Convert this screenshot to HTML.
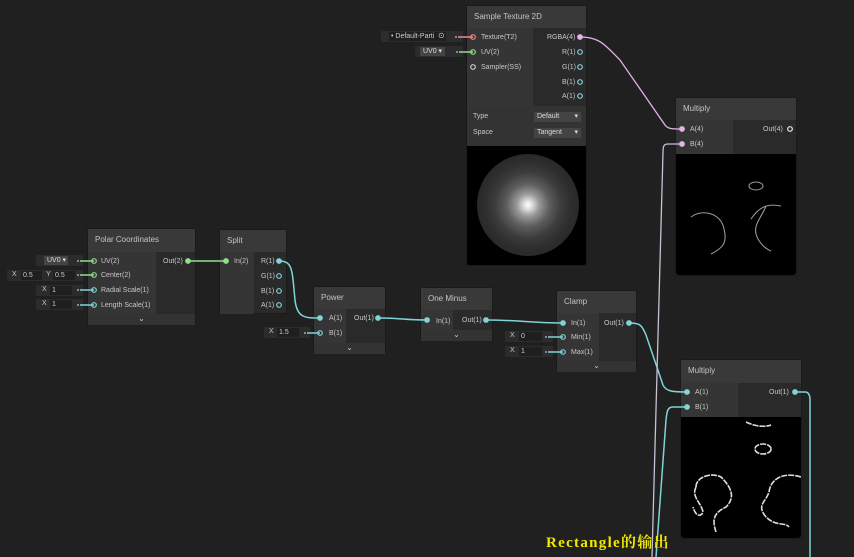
<!DOCTYPE html>
<html><head><meta charset="utf-8"><style>
body{margin:0;width:854px;height:557px;background:#202020;position:relative;overflow:hidden;font-family:"Liberation Sans",sans-serif;font-size:7px;color:#c8c8c8}
.n{position:absolute;background:#2a2a2a;border:1px solid #1a1a1a;box-sizing:border-box;border-radius:2px}
.h{position:absolute;left:0;right:0;top:0;background:#393939;color:#c4c4c4;font-size:8px;padding-left:7px;box-sizing:border-box}
.in{position:absolute;left:0;background:#353535}
.col{position:absolute;left:0;right:0;background:#333;text-align:center;color:#ccc;font-size:8px;line-height:10px}
.t{position:absolute;white-space:nowrap}
.f{position:absolute;background:#2c2c2c;height:11px;border-radius:1px}
.fb{position:absolute;background:#1f1f1f;height:9px;top:1px;color:#ccc;line-height:9px;padding-left:2px;box-sizing:border-box}
.d{position:absolute;background:#444;color:#ddd;height:10px;line-height:10px;padding-left:3px;box-sizing:border-box}
svg{position:absolute;left:0;top:0}
</style></head><body>

<div class="n" style="left:87px;top:228px;width:109px;height:97px">
<div class="h" style="height:23px;line-height:22px">Polar Coordinates</div>
<div class="in" style="top:23px;width:68px;height:62px"></div>
<div class="col" style="top:85px;height:11px">⌄</div>
<div class="t" style="left:13px;top:29px">UV(2)</div>
<div class="t" style="left:13px;top:43px">Center(2)</div>
<div class="t" style="left:13px;top:58px">Radial Scale(1)</div>
<div class="t" style="left:13px;top:73px">Length Scale(1)</div>
<div class="t" style="left:75px;top:29px">Out(2)</div>
</div>
<div class="n" style="left:219px;top:229px;width:68px;height:85px">
<div class="h" style="height:22px;line-height:21px">Split</div>
<div class="in" style="top:22px;width:34px;height:62px"></div>
<div class="t" style="left:14px;top:28px">In(2)</div>
<div class="t" style="left:41px;top:28px">R(1)</div>
<div class="t" style="left:41px;top:43px">G(1)</div>
<div class="t" style="left:41px;top:58px">B(1)</div>
<div class="t" style="left:41px;top:72px">A(1)</div>
</div>
<div class="n" style="left:313px;top:286px;width:73px;height:68px">
<div class="h" style="height:22px;line-height:21px">Power</div>
<div class="in" style="top:22px;width:32px;height:34px"></div>
<div class="col" style="top:56px;height:11px">⌄</div>
<div class="t" style="left:15px;top:28px">A(1)</div>
<div class="t" style="left:15px;top:43px">B(1)</div>
<div class="t" style="left:40px;top:28px">Out(1)</div>
</div>
<div class="n" style="left:420px;top:287px;width:73px;height:54px">
<div class="h" style="height:22px;line-height:21px">One Minus</div>
<div class="in" style="top:22px;width:32px;height:20px"></div>
<div class="col" style="top:42px;height:11px">⌄</div>
<div class="t" style="left:15px;top:30px">In(1)</div>
<div class="t" style="left:41px;top:29px">Out(1)</div>
</div>
<div class="n" style="left:556px;top:290px;width:81px;height:82px">
<div class="h" style="height:22px;line-height:21px">Clamp</div>
<div class="in" style="top:22px;width:42px;height:48px"></div>
<div class="col" style="top:70px;height:11px">⌄</div>
<div class="t" style="left:14px;top:29px">In(1)</div>
<div class="t" style="left:14px;top:43px">Min(1)</div>
<div class="t" style="left:14px;top:58px">Max(1)</div>
<div class="t" style="left:47px;top:29px">Out(1)</div>
</div>
<div class="n" style="left:466px;top:5px;width:121px;height:261px">
<div class="h" style="height:22px;line-height:21px">Sample Texture 2D</div>
<div class="in" style="top:22px;width:66px;height:78px"></div>
<div style="position:absolute;left:0;right:0;top:100px;height:40px;background:#333"></div>
<div class="t" style="left:14px;top:28px">Texture(T2)</div>
<div class="t" style="left:14px;top:43px">UV(2)</div>
<div class="t" style="left:14px;top:58px">Sampler(SS)</div>
<div class="t" style="left:80px;top:28px">RGBA(4)</div>
<div class="t" style="left:95px;top:43px">R(1)</div>
<div class="t" style="left:95px;top:58px">G(1)</div>
<div class="t" style="left:95px;top:73px">B(1)</div>
<div class="t" style="left:95px;top:87px">A(1)</div>
<div class="t" style="left:6px;top:107px">Type</div>
<div class="t" style="left:6px;top:123px">Space</div>
<div class="d" style="left:67px;top:106px;width:47px">Default<span style="position:absolute;right:3px">▾</span></div>
<div class="d" style="left:67px;top:122px;width:47px">Tangent<span style="position:absolute;right:3px">▾</span></div>
<div style="position:absolute;left:0;top:140px;width:119px;height:119px;background:#000;border-radius:0 0 2px 2px">
<div style="position:absolute;left:10px;top:8px;width:102px;height:102px;border-radius:50%;background:radial-gradient(circle closest-side,#fff 0%,#e0e0e0 8%,#999 22%,#5e5e5e 42%,#3c3c3c 65%,#2e2e2e 85%,#292929 100%)"></div></div>
</div>
<div class="n" style="left:675px;top:97px;width:122px;height:179px">
<div class="h" style="height:22px;line-height:21px">Multiply</div>
<div class="in" style="top:22px;width:57px;height:34px"></div>
<div class="t" style="left:14px;top:28px">A(4)</div>
<div class="t" style="left:14px;top:43px">B(4)</div>
<div class="t" style="left:87px;top:28px">Out(4)</div>
<div style="position:absolute;left:0;top:56px;width:120px;height:121px;background:#000;border-radius:0 0 3px 3px">
<svg width="120" height="121" fill="none" stroke="#999" stroke-width="1.1"><path d="M15 63 C25 55 45 58 48 75 C52 90 45 95 35 100"/><path d="M75 65 C85 50 95 50 105 52 M90 52 C85 65 75 72 82 85 C86 92 90 95 95 97"/><ellipse cx="80" cy="32" rx="7" ry="4"/></svg></div>
</div>
<div class="n" style="left:680px;top:359px;width:122px;height:180px">
<div class="h" style="height:23px;line-height:22px">Multiply</div>
<div class="in" style="top:23px;width:57px;height:34px"></div>
<div class="t" style="left:14px;top:29px">A(1)</div>
<div class="t" style="left:14px;top:44px">B(1)</div>
<div class="t" style="left:88px;top:29px">Out(1)</div>
<div style="position:absolute;left:0;top:57px;width:120px;height:121px;background:#000;border-radius:0 0 3px 3px">
<svg width="120" height="121" fill="none" stroke="#ddd" stroke-width="1.6" stroke-dasharray="6 1"><path d="M65 5 C75 10 85 10 90 8"/><ellipse cx="82" cy="32" rx="8" ry="5"/><path d="M15 70 C15 60 30 55 40 60 C50 70 55 80 45 90 C35 95 30 100 35 115 M15 70 C10 80 20 85 22 95 C20 100 15 100 12 90"/><path d="M120 60 C105 55 90 60 88 75 C85 85 75 88 85 100 C95 110 105 105 108 110"/></svg></div>
</div>

<div class="f" style="left:36px;top:255px;width:47px"><div class="d" style="left:8px;top:1px;width:24px;height:9px;line-height:9px;background:#444">UV0 ▾</div></div>
<div class="f" style="left:7px;top:270px;width:76px"><span class="t" style="left:5px;top:1px">X</span><div class="fb" style="left:14px;width:21px">0.5</div><span class="t" style="left:39px;top:1px">Y</span><div class="fb" style="left:46px;width:22px">0.5</div></div>
<div class="f" style="left:36px;top:285px;width:47px"><span class="t" style="left:6px;top:1px">X</span><div class="fb" style="left:14px;width:22px">1</div></div>
<div class="f" style="left:36px;top:299px;width:47px"><span class="t" style="left:6px;top:1px">X</span><div class="fb" style="left:14px;width:22px">1</div></div>
<div class="f" style="left:264px;top:327px;width:46px"><span class="t" style="left:5px;top:1px">X</span><div class="fb" style="left:13px;width:22px">1.5</div></div>
<div class="f" style="left:505px;top:331px;width:48px"><span class="t" style="left:5px;top:1px">X</span><div class="fb" style="left:14px;width:23px">0</div></div>
<div class="f" style="left:505px;top:346px;width:48px"><span class="t" style="left:5px;top:1px">X</span><div class="fb" style="left:14px;width:23px">1</div></div>
<div class="f" style="left:381px;top:31px;width:82px"><div class="fb" style="left:8px;width:57px;color:#ccc">• Default-Parti</div><span class="t" style="left:57px;top:0px;font-size:8px">⊙</span></div>
<div class="f" style="left:415px;top:46px;width:48px"><div class="d" style="left:5px;top:1px;width:25px;height:9px;line-height:9px">UV0 ▾</div></div>

<svg width="854" height="557" fill="none">
<g fill="#ccc"><circle cx="78" cy="261" r=".9"/><circle cx="78" cy="275" r=".9"/><circle cx="78" cy="290" r=".9"/><circle cx="78" cy="305" r=".9"/><circle cx="305" cy="333" r=".9"/><circle cx="546" cy="337" r=".9"/><circle cx="546" cy="352" r=".9"/><circle cx="456" cy="37" r=".9"/><circle cx="457" cy="52" r=".9"/></g>
<g stroke="#8fe08a" stroke-width="1.5"><path d="M80 261H94M80 275H94M188 261C205 261 210 261 226 261M459 52H473"/></g>
<g stroke="#7fd4d8" stroke-width="1.5"><path d="M80 290H94M80 305H94M307 333H320M548 337H563M548 352H563"/>
<path d="M279 261C293 261 292 270 295 300C297 318 305 318 320 318"/>
<path d="M378 318C400 318 405 320 427 320"/>
<path d="M486 320C520 320 530 323 563 323"/>
<path d="M629 323C640 323 642 325 646 335L663 385C666 392 675 392 687 392"/>
<path d="M687 407H673C668 407 667 410 666 420L656 557"/>
<path d="M795 392H805C808 392 810 394 810 400V557"/></g>
<g stroke="#f08a8a" stroke-width="1.5"><path d="M458 37H473"/></g>
<g stroke="#e3b3e8" stroke-width="1.3"><path d="M580 37C600 37 605 45 620 60L665 125C668 129 672 129 682 129"/>
<path d="M682 144H668C664 144 663 146 663 152L652 557" stroke="#c9c0d4"/></g>
<g stroke-width="1.2"><circle cx="94" cy="261" r="2.3" stroke="#8fe08a"/><circle cx="94" cy="275" r="2.3" stroke="#8fe08a"/><circle cx="94" cy="290" r="2.3" stroke="#7fd4d8"/><circle cx="94" cy="305" r="2.3" stroke="#7fd4d8"/>
<circle cx="188" cy="261" r="2.3" stroke="#8fe08a" fill="#8fe08a"/><circle cx="226" cy="261" r="2.3" stroke="#8fe08a" fill="#8fe08a"/>
<circle cx="279" cy="261" r="2.3" stroke="#7fd4d8" fill="#7fd4d8"/><circle cx="279" cy="276" r="2.3" stroke="#7fd4d8"/><circle cx="279" cy="291" r="2.3" stroke="#7fd4d8"/><circle cx="279" cy="305" r="2.3" stroke="#7fd4d8"/>
<circle cx="320" cy="318" r="2.3" stroke="#7fd4d8" fill="#7fd4d8"/><circle cx="320" cy="333" r="2.3" stroke="#7fd4d8"/><circle cx="378" cy="318" r="2.3" stroke="#7fd4d8" fill="#7fd4d8"/>
<circle cx="427" cy="320" r="2.3" stroke="#7fd4d8" fill="#7fd4d8"/><circle cx="486" cy="320" r="2.3" stroke="#7fd4d8" fill="#7fd4d8"/>
<circle cx="563" cy="323" r="2.3" stroke="#7fd4d8" fill="#7fd4d8"/><circle cx="563" cy="337" r="2.3" stroke="#7fd4d8"/><circle cx="563" cy="352" r="2.3" stroke="#7fd4d8"/><circle cx="629" cy="323" r="2.3" stroke="#7fd4d8" fill="#7fd4d8"/>
<circle cx="473" cy="37" r="2.3" stroke="#f08a8a"/><circle cx="473" cy="52" r="2.3" stroke="#8fe08a"/><circle cx="473" cy="67" r="2.3" stroke="#ccc"/>
<circle cx="580" cy="37" r="2.3" stroke="#e3b3e8" fill="#e3b3e8"/><circle cx="580" cy="52" r="2.3" stroke="#7fd4d8"/><circle cx="580" cy="67" r="2.3" stroke="#7fd4d8"/><circle cx="580" cy="82" r="2.3" stroke="#7fd4d8"/><circle cx="580" cy="96" r="2.3" stroke="#7fd4d8"/>
<circle cx="682" cy="129" r="2.3" stroke="#e3b3e8" fill="#e3b3e8"/><circle cx="682" cy="144" r="2.3" stroke="#e3b3e8" fill="#e3b3e8"/><circle cx="790" cy="129" r="2.3" stroke="#eee"/>
<circle cx="687" cy="392" r="2.3" stroke="#7fd4d8" fill="#7fd4d8"/><circle cx="687" cy="407" r="2.3" stroke="#7fd4d8" fill="#7fd4d8"/><circle cx="795" cy="392" r="2.3" stroke="#7fd4d8" fill="#7fd4d8"/></g>
</svg>
<div class="t" style="left:546px;top:531px;font-family:'Liberation Serif','Noto Serif CJK SC',serif;font-weight:bold;font-size:15px;color:#f0e800;letter-spacing:1.3px">Rectangle的输出</div>
</body></html>
